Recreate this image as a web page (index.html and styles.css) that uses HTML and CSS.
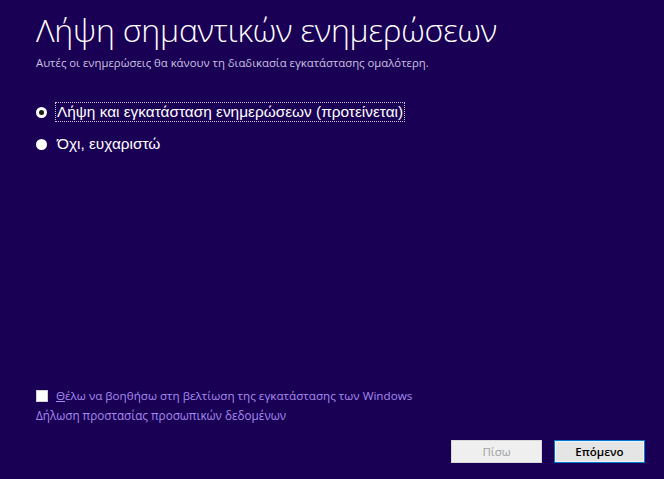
FILE: index.html
```html
<!DOCTYPE html>
<html lang="el">
<head>
<meta charset="utf-8">
<link rel="stylesheet" href="styles.css">
</head>
<body>
<div class="page">
  <header class="head">
    <h1 class="title">Λήψη σημαντικών ενημερώσεων</h1>
    <p class="subtitle">Αυτές οι ενημερώσεις θα κάνουν τη διαδικασία εγκατάστασης ομαλότερη.</p>
  </header>
  <div class="options">
    <label class="opt">
      <span class="radio checked"></span>
      <span class="opt-text focused">Λήψη και εγκατάσταση ενημερώσεων (προτείνεται)</span>
    </label>
    <label class="opt">
      <span class="radio"></span>
      <span class="opt-text">Όχι, ευχαριστώ</span>
    </label>
  </div>
  <div class="spacer"></div>
  <div class="bottom">
    <label class="check-row">
      <span class="checkbox"></span>
      <span class="check-text"><u>Θ</u>έλω να βοηθήσω στη βελτίωση της εγκατάστασης των Windows</span>
    </label>
    <a class="privacy">Δήλωση προστασίας προσωπικών δεδομένων</a>
  </div>
  <div class="buttons">
    <button class="btn disabled">Πίσω</button>
    <button class="btn primary">Επόμενο</button>
  </div>
</div>
</body>
</html>
```
FILE: styles.css
```css
html, body {
  margin: 0;
  padding: 0;
  height: 100%;
}
body {
  background: #1a0054;
  font-family: "Open Sans", "Noto Sans", sans-serif;
  color: #ffffff;
  overflow: hidden;
}
.page {
  height: 479px;
  box-sizing: border-box;
  padding: 9px 19px 16px 36px;
  display: flex;
  flex-direction: column;
}
.title {
  margin: 0;
  font-weight: 300;
  font-size: 32px;
  line-height: 42px;
  letter-spacing: -0.2px;
}
.subtitle {
  margin: 4px 0 0;
  font-size: 11.35px;
  line-height: 16px;
  color: #c9c3e0;
}
.options {
  margin-top: 31px;
  display: flex;
  flex-direction: column;
  gap: 12px;
}
.opt {
  display: flex;
  align-items: center;
  gap: 8px;
  height: 20px;
}
.radio {
  width: 11px;
  height: 11px;
  border-radius: 50%;
  background: #ffffff;
  box-sizing: border-box;
  position: relative;
  flex: none;
}
.radio.checked::after {
  content: "";
  position: absolute;
  left: 3px;
  top: 3px;
  width: 5px;
  height: 5px;
  border-radius: 50%;
  background: #1a1a1a;
}
.opt-text {
  font-family: "Liberation Sans", Arial, sans-serif;
  font-size: 15.4px;
  line-height: 18px;
  padding: 0 1px;
  border: 1px dotted transparent;
}
.opt-text.focused {
  border-color: #c8c8c8;
}
.spacer {
  flex: 1;
}
.bottom {
  display: flex;
  flex-direction: column;
  gap: 3px;
}
.check-row {
  display: flex;
  align-items: center;
  gap: 8px;
}
.checkbox {
  width: 12px;
  height: 12px;
  background: #ffffff;
  border: 1px solid #d0d0d0;
  box-sizing: border-box;
  flex: none;
}
.check-text {
  font-size: 11.65px;
  line-height: 16px;
  color: #a68cf0;
}
.privacy {
  font-size: 11.7px;
  line-height: 16px;
  color: #a68cf0;
}
.buttons {
  margin-top: 17px;
  display: flex;
  justify-content: flex-end;
  gap: 12px;
}
.btn {
  width: 91px;
  height: 23px;
  box-sizing: border-box;
  font-family: "Open Sans", sans-serif;
  font-size: 11.5px;
  padding: 0;
  background: #e1e1e1;
  border: 1px solid #adadad;
  color: #000;
}
.btn.disabled {
  background: #efefef;
  border-color: #d8d8d8;
  color: #a0a0a0;
}
.btn.primary {
  background: #e5e5e5;
  border: 1px solid #0078d7;
  box-shadow: inset 0 0 0 1px #f4f4f4;
  font-weight: 600;
}
```
